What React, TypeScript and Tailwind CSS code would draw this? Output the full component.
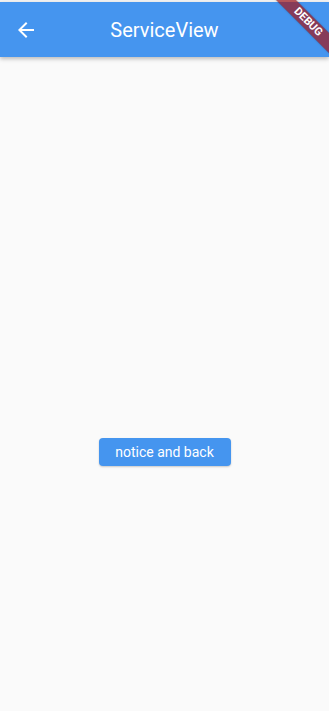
export default function App() {
  return (
    <div className="relative flex h-[711px] w-full flex-col overflow-hidden bg-[#fafafa] font-['Roboto','Liberation_Sans',sans-serif]">
      <div className="h-[2px] bg-[#f2f2f2]" />
      <header className="flex h-[55px] items-center bg-[#4595ef] text-white shadow-[0_2px_4px_rgba(0,0,0,0.25)]">
        <div className="flex w-[52px] items-center justify-center">
          <svg viewBox="0 0 24 24" className="h-6 w-6" fill="currentColor">
            <path d="M20 11H7.83l5.59-5.59L12 4l-8 8 8 8 1.41-1.41L7.83 13H20v-2z" />
          </svg>
        </div>
        <h1 className="flex-1 text-center text-[20px] font-normal leading-none">ServiceView</h1>
        <div className="w-[52px]" />
      </header>
      <main className="flex flex-1 justify-center pt-[381px]">
        <button className="h-[28px] w-[132px] rounded-[4px] bg-[#4595ef] text-[14px] text-white shadow-[0_1px_2px_rgba(0,0,0,0.2)]">
          notice and back
        </button>
      </main>
      <div className="pointer-events-none absolute right-0 top-0 h-[80px] w-[80px] overflow-hidden">
        <div className="absolute left-[-1px] top-[15px] flex h-[14px] w-[120px] rotate-45 items-center justify-center bg-[rgba(160,25,30,0.72)] text-[11px] font-bold leading-[14px] text-white shadow-[0_0_2px_rgba(0,0,0,0.3)]">
          DEBUG
        </div>
      </div>
    </div>
  );
}
